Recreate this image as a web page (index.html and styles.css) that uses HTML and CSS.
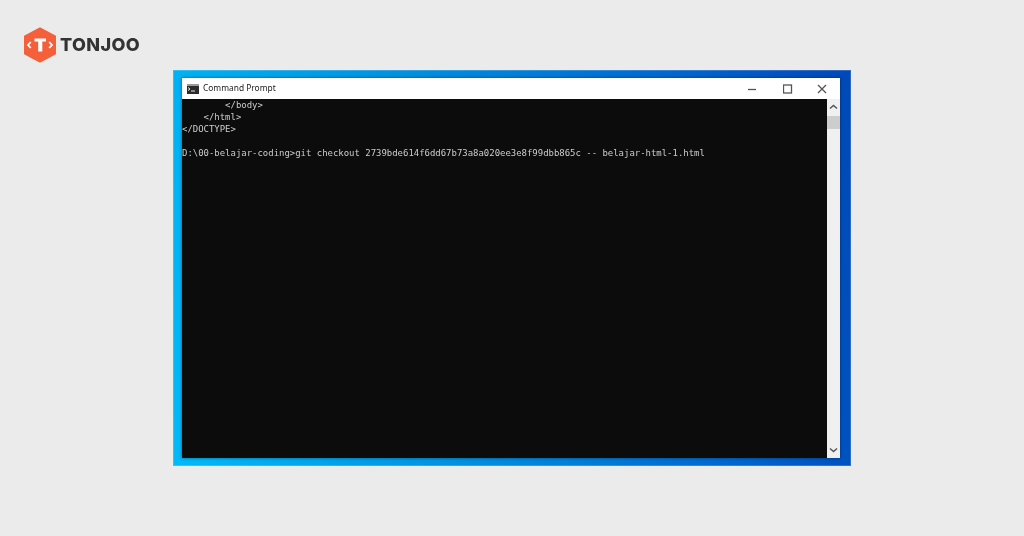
FILE: index.html
```html
<!DOCTYPE html>
<html lang="en">
<head>
<meta charset="utf-8">
<title>Tonjoo - Command Prompt</title>
<link rel="stylesheet" href="styles.css">
</head>
<body>
<header class="brand">
  <svg class="brand-mark" width="34" height="36" viewBox="0 0 34 36">
    <path class="hex" d="M17 1.5 L32 9.5 V26.5 L17 34.5 L2 26.5 V9.5 Z"/>
    <path class="mark-t" d="M11.5 11.5 H23 V14.6 H19.3 V24.5 H15.2 V14.6 H11.5 Z"/>
    <path class="mark-b" d="M7.8 15 L5 18 L7.8 21 M26.2 15 L29 18 L26.2 21"/>
  </svg>
  <span class="brand-name">TONJOO</span>
</header>
<main class="desktop">
  <section class="frame">
    <div class="window">
      <div class="titlebar">
        <svg class="cmd-icon" width="12" height="10" viewBox="0 0 12 10">
          <rect width="12" height="10" fill="#2c2c2c"/>
          <rect x="0" y="0" width="12" height="2" fill="#9a9a9a"/>
          <path d="M1 3.5 L3 5 L1 6.5 M4 7 H8" stroke="#e8e8e8" fill="none"/>
        </svg>
        <span class="title">Command Prompt</span>
        <div class="controls">
          <svg class="ctl ctl-min" width="10" height="10" viewBox="0 0 10 10"><path d="M0 5.5 H8"/></svg>
          <svg class="ctl ctl-max" width="10" height="10" viewBox="0 0 10 10"><rect x="0.5" y="1" width="8" height="8"/></svg>
          <svg class="ctl ctl-close" width="10" height="10" viewBox="0 0 10 10"><path d="M1 1 L9 9 M9 1 L1 9"/></svg>
        </div>
      </div>
      <div class="content">
        <pre class="console">        &lt;/body&gt;
    &lt;/html&gt;
&lt;/DOCTYPE&gt;

D:\00-belajar-coding&gt;git checkout 2739bde614f6dd67b73a8a020ee3e8f99dbb865c -- belajar-html-1.html</pre>
        <div class="scrollbar">
          <svg class="arrow" width="13" height="17" viewBox="0 0 13 17"><path d="M3 9.5 L6.5 6.5 L10 9.5"/></svg>
          <div class="track"><div class="thumb"></div></div>
          <svg class="arrow" width="13" height="17" viewBox="0 0 13 17"><path d="M3 7.5 L6.5 10.5 L10 7.5"/></svg>
        </div>
      </div>
    </div>
  </section>
</main>
</body>
</html>
```
FILE: styles.css
```css
html, body {
  margin: 0;
  height: 536px;
  overflow: hidden;
  background: #ebebeb;
}
.brand {
  display: flex;
  align-items: center;
  gap: 3px;
  height: 36px;
  padding: 27px 0 7px 23px;
}
.brand-mark { display: block; flex: none; }
.hex {
  fill: #f4603c;
  stroke: #f4603c;
  stroke-width: 2;
  stroke-linejoin: round;
}
.mark-t { fill: #fff; }
.mark-b { fill: none; stroke: #fff; stroke-width: 1.8; }
.brand-name {
  font: 800 18px/1 "Inter", "Liberation Sans", sans-serif;
  color: #333;
  letter-spacing: 0.4px;
  filter: blur(0.35px);
}
.desktop {
  display: flex;
  justify-content: center;
}
.frame {
  width: 658px;
  height: 380px;
  padding: 8px 11px 8px 9px;
  background: linear-gradient(82deg, #00baf8 0%, #0090e0 40%, #0068d0 75%, #0048b8 100%);
  box-shadow: inset 0 0 0 1px rgba(255, 255, 255, 0.18);
}
.window {
  display: flex;
  flex-direction: column;
  height: 100%;
  background: #0c0c0c;
  box-shadow: 0 0 3px rgba(0, 0, 0, 0.45);
}
.titlebar {
  display: flex;
  align-items: center;
  flex: none;
  height: 21px;
  background: #fff;
  padding-left: 5px;
}
.cmd-icon { flex: none; filter: blur(0.3px); }
.title {
  margin-left: 4px;
  font: 8.4px/1 "Noto Sans", "Liberation Sans", sans-serif;
  color: #222;
  filter: blur(0.25px);
}
.controls {
  display: flex;
  align-items: center;
  margin-left: auto;
  filter: blur(0.3px);
}
.ctl {
  display: block;
  width: 10px;
  height: 10px;
  fill: none;
  stroke: #555;
  stroke-width: 1.3;
}
.ctl-min { margin-right: 25px; }
.ctl-max { margin-right: 24px; }
.ctl-close { margin-right: 13px; }
.content {
  display: flex;
  flex: 1;
  min-height: 0;
}
.console {
  flex: 1;
  margin: 0;
  padding: 0;
  font: 8.96px/12px "DejaVu Sans Mono", "Liberation Mono", monospace;
  color: #cccccc;
  background: #0c0c0c;
  filter: blur(0.3px);
}
.scrollbar {
  display: flex;
  flex-direction: column;
  flex: none;
  width: 13px;
  background: #f0f0f0;
}
.arrow {
  display: block;
  flex: none;
  fill: none;
  stroke: #555;
  stroke-width: 1.5;
}
.track {
  flex: 1;
}
.thumb {
  height: 13px;
  background: #cdcdcd;
}
```
